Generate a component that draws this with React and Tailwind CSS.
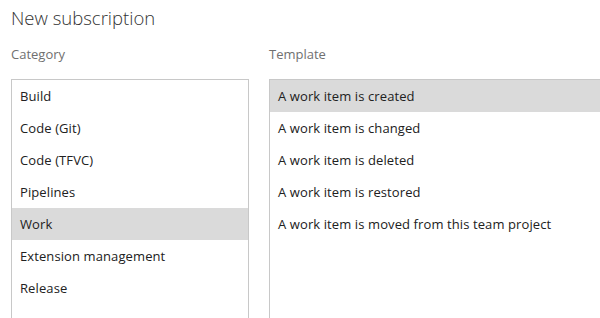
export default function App() {
  const categories = ["Build", "Code (Git)", "Code (TFVC)", "Pipelines", "Work", "Extension management", "Release"];
  const templates = [
    "A work item is created",
    "A work item is changed",
    "A work item is deleted",
    "A work item is restored",
    "A work item is moved from this team project",
  ];
  return (
    <div className="w-[600px] h-[318px] overflow-hidden bg-white pl-[11px] pt-[5px]" style={{ fontFamily: '"Open Sans", "Noto Sans", sans-serif' }}>
      <div className="text-[18.5px] leading-[26px] font-light text-[#333]">New subscription</div>
      <div className="flex gap-[20px] mt-[14px]">
        <div className="w-[238px] shrink-0">
          <div className="text-[13px] leading-[18px] text-[#707070]">Category</div>
          <div className="mt-[16px] border border-[#c8c8c8] h-[260px]">
            {categories.map((c) => (
              <div key={c} className={`h-[32px] flex items-center pl-[8px] pt-[1px] text-[13px] tracking-[0.1px] text-[#212121] ${c === "Work" ? "bg-[#dadada]" : ""}`}>{c}</div>
            ))}
          </div>
        </div>
        <div className="w-[360px] shrink-0">
          <div className="text-[13px] leading-[18px] text-[#707070]">Template</div>
          <div className="mt-[16px] border border-[#c8c8c8] h-[260px]">
            {templates.map((t, i) => (
              <div key={t} className={`h-[32px] flex items-center pl-[8px] pt-[1px] text-[13px] tracking-[0.1px] text-[#212121] ${i === 0 ? "bg-[#dadada]" : ""}`}>{t}</div>
            ))}
          </div>
        </div>
      </div>
    </div>
  );
}
